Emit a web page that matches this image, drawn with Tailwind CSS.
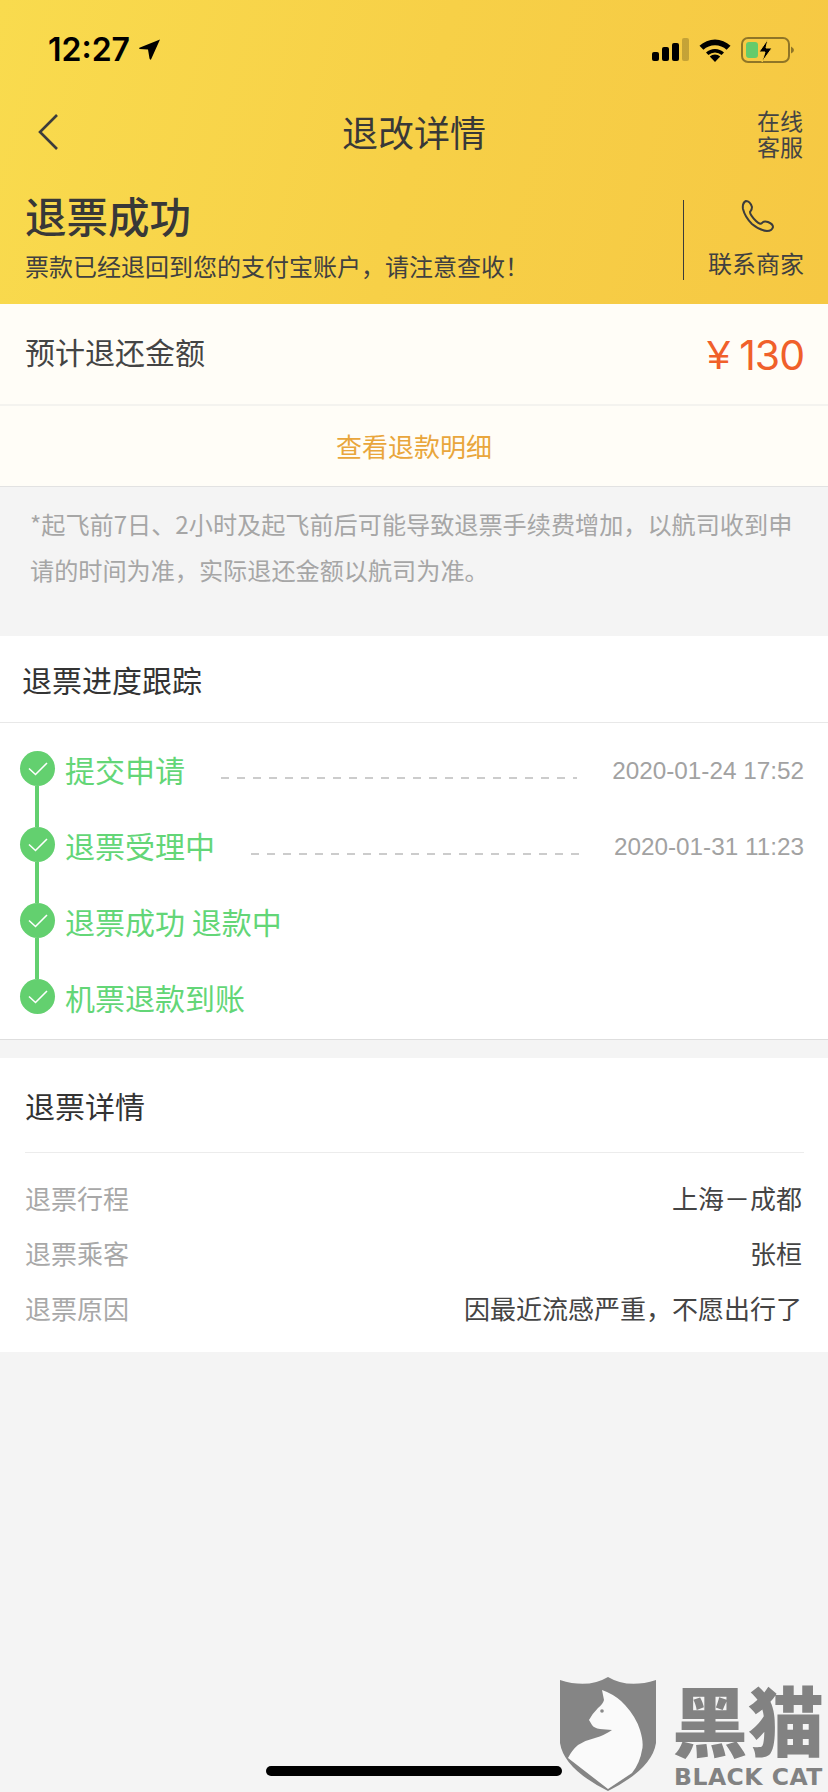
<!DOCTYPE html>
<html lang="zh"><head><meta charset="utf-8">
<script src="https://cdn.jsdelivr.net/npm/@tailwindcss/browser@4"></script>
</head>
<body class="m-0">
<div class="relative w-[828px] h-[1792px] overflow-hidden bg-[#f4f4f4] font-['Noto_Sans_CJK_SC','Noto_Sans',sans-serif] text-[#333]">
  <!-- yellow header -->
  <div class="h-[304px] bg-[linear-gradient(105deg,#f9db4e,#f7d047_50%,#f6c843)] flex flex-col">
    <div class="h-[94px] flex items-center justify-between pl-[48px] pr-[34px] pt-[5px] text-black">
      <div class="flex items-center gap-[9px]">
        <span class="font-['Inter'] font-semibold text-[32px] leading-none">12:27</span>
        <svg width="21" height="21" viewBox="0 0 21 21"><path d="M21 0.5 L12 20.5 Q11 21 10.5 19.5 L9 10.5 L0.5 10 Q-0.3 9 1 8.5 Z" fill="#000"/></svg>
      </div>
      <div class="flex items-center gap-[10px]">
        <svg width="37" height="23" viewBox="0 0 37 23"><rect x="0" y="14" width="7" height="9" rx="2"/><rect x="10" y="9" width="7" height="14" rx="2"/><rect x="20" y="5" width="7" height="18" rx="2"/><rect x="30" y="0" width="7" height="23" rx="2" fill="#000" fill-opacity=".2"/></svg>
        <svg width="32" height="24" viewBox="0 0 32 24"><path d="M16 24 L10.8 18.6 A7.5 7.5 0 0 1 21.2 18.6 Z"/><path d="M7 14.6 A13 13 0 0 1 25 14.6 L22.6 17.1 A9.6 9.6 0 0 0 9.4 17.1 Z"/><path d="M0.5 7.8 A22.5 22.5 0 0 1 31.5 7.8 L27.6 11.8 A17 17 0 0 0 4.4 11.8 Z"/></svg>
        <svg width="53" height="26" viewBox="0 0 53 26"><rect x="1" y="1" width="47" height="24" rx="6" fill="none" stroke="#000" stroke-opacity=".42" stroke-width="2"/><path d="M50 9.5 q3 1.5 3 3.5 t-3 3.5 Z" fill="#000" fill-opacity=".42"/><rect x="5" y="5" width="12" height="16" rx="3" fill="#65cb6b"/><path d="M27 2 L18 15 L24 15 L21 25 L31 11 L25 11 Z" fill="#000" stroke="#f6cc44" stroke-width="1"/></svg>
      </div>
    </div>
    <div class="h-[79px] pb-[6px] relative flex items-center justify-center">
      <svg class="absolute left-[37px] top-[19px]" width="22" height="38" viewBox="0 0 22 38"><path d="M20 2 L3 19 L20 36" fill="none" stroke="#3c3c3c" stroke-width="2.6"/></svg>
      <div class="text-[36px] leading-none text-[#383838]">退改详情</div>
      <div class="absolute right-[25px] top-[13px] w-[46px] text-[23px] leading-[26px] text-[#444]">在线<br>客服</div>
    </div>
    <div class="flex-1 flex pl-[25px] pr-[24px]">
      <div class="flex-1 pt-[17px]">
        <div class="text-[41.5px] leading-[50px] font-medium text-[#383838]">退票成功</div>
        <div class="text-[24px] leading-[32px] mt-[10px] text-[#404040]">票款已经退回到您的支付宝账户，请注意查收！</div>
      </div>
      <div class="w-[1px] h-[80px] mt-[27px] bg-[#3a3a3a]"></div>
      <div class="w-[120px] flex flex-col items-end pt-[26px]">
        <svg class="mr-[29px]" width="34" height="34" viewBox="0 0 34 34"><path d="M5 2 Q1 4 2 10 Q4 18 11 25 Q18 31 26 32 Q31 32 32 28 Q32 25 27 23 Q23 21.5 21 24 Q19 26 15 22 Q9 16 9 13 Q11 11 11 8 Q9 2 5 2 Z" fill="none" stroke="#3c3c3c" stroke-width="2"/></svg>
        <div class="text-[24px] leading-[32px] mt-[14px] text-[#404040] whitespace-nowrap">联系商家</div>
      </div>
    </div>
  </div>
  <!-- amount -->
  <div class="bg-[#fffdf7]">
    <div class="h-[102px] flex items-center justify-between pl-[25px] pr-[24px] border-b-2 border-[#f4f3ef]">
      <span class="text-[30px] leading-none text-[#444] -mt-[7px]">预计退还金额</span>
      <span class="text-[#f0602a] flex items-center gap-[9px] font-['Liberation_Sans'] text-[41px] leading-none mt-[3px]"><span>¥</span><span class="font-['Inter'] tracking-[-1px]">130</span></span>
    </div>
    <div class="h-[81px] flex items-center justify-center text-[26px] leading-none text-[#e9a63c] border-b border-[#e2e2e2]">查看退款明细</div>
  </div>
  <!-- note -->
  <div class="h-[149px] pl-[30px] pr-[30px] pt-[14px] text-[24.15px] leading-[46px] text-[#a6a6a6]">*起飞前7日、2小时及起飞前后可能导致退票手续费增加，以航司收到申请的时间为准，实际退还金额以航司为准。</div>
  <!-- progress -->
  <div class="bg-white h-[404px] border-b border-[#dedede]">
    <div class="h-[87px] flex items-center pl-[22px] text-[30px] leading-none text-[#333] border-b border-[#e8e8e8]">退票进度跟踪</div>
    <div class="pt-[28px] pl-[20px] pr-[24px]">
      <div class="flex items-center h-[35px] mb-[41px]">
        <div class="relative w-[35px] h-[35px] rounded-full bg-[#63d06f] flex items-center justify-center shrink-0"><svg width="20" height="14" viewBox="0 0 20 14"><path d="M1 6.5 L7.5 12.5 L19 1" fill="none" stroke="#fff" stroke-width="1.6"/></svg><div class="absolute left-[15px] top-[35px] w-[4px] h-[41px] bg-[#63d06f]"></div></div>
        <span class="ml-[10px] text-[30px] leading-none text-[#63d677]">提交申请</span>
        <div class="flex-1 ml-[36px] mr-[35px] mt-[18px] h-[2px] bg-[repeating-linear-gradient(90deg,#cccccc_0,#cccccc_8px,transparent_8px,transparent_16px)]"></div>
        <span class="font-['Liberation_Sans'] text-[24.3px] leading-none mt-[5px] text-[#a2a2a2]">2020-01-24 17:52</span>
      </div>
      <div class="flex items-center h-[35px] mb-[41px]">
        <div class="relative w-[35px] h-[35px] rounded-full bg-[#63d06f] flex items-center justify-center shrink-0"><svg width="20" height="14" viewBox="0 0 20 14"><path d="M1 6.5 L7.5 12.5 L19 1" fill="none" stroke="#fff" stroke-width="1.6"/></svg><div class="absolute left-[15px] top-[35px] w-[4px] h-[41px] bg-[#63d06f]"></div></div>
        <span class="ml-[10px] text-[30px] leading-none text-[#63d677]">退票受理中</span>
        <div class="flex-1 ml-[36px] mr-[35px] mt-[18px] h-[2px] bg-[repeating-linear-gradient(90deg,#cccccc_0,#cccccc_8px,transparent_8px,transparent_16px)]"></div>
        <span class="font-['Liberation_Sans'] text-[24.3px] leading-none mt-[5px] text-[#a2a2a2]">2020-01-31 11:23</span>
      </div>
      <div class="flex items-center h-[35px] mb-[41px]">
        <div class="relative w-[35px] h-[35px] rounded-full bg-[#63d06f] flex items-center justify-center shrink-0"><svg width="20" height="14" viewBox="0 0 20 14"><path d="M1 6.5 L7.5 12.5 L19 1" fill="none" stroke="#fff" stroke-width="1.6"/></svg><div class="absolute left-[15px] top-[35px] w-[4px] h-[41px] bg-[#63d06f]"></div></div>
        <span class="ml-[10px] text-[30px] leading-none text-[#63d677]">退票成功 退款中</span>
      </div>
      <div class="flex items-center h-[35px]">
        <div class="w-[35px] h-[35px] rounded-full bg-[#63d06f] flex items-center justify-center shrink-0"><svg width="20" height="14" viewBox="0 0 20 14"><path d="M1 6.5 L7.5 12.5 L19 1" fill="none" stroke="#fff" stroke-width="1.6"/></svg></div>
        <span class="ml-[10px] text-[30px] leading-none text-[#63d677]">机票退款到账</span>
      </div>
    </div>
  </div>
  <!-- details -->
  <div class="mt-[18px] bg-white h-[294px] pl-[25px] pr-[24px]">
    <div class="h-[95px] flex items-center text-[30px] leading-none border-b border-[#ececec]">退票详情</div>
    <div class="pt-[17px] pr-[2px] text-[26px] leading-[55px]">
      <div class="flex justify-between"><span class="text-[#a8a8a8]">退票行程</span><span class="text-[#444]">上海－成都</span></div>
      <div class="flex justify-between"><span class="text-[#a8a8a8]">退票乘客</span><span class="text-[#444]">张桓</span></div>
      <div class="flex justify-between"><span class="text-[#a8a8a8]">退票原因</span><span class="text-[#444]">因最近流感严重，不愿出行了</span></div>
    </div>
  </div>
  <!-- home bar -->
  <div class="absolute left-[266px] top-[1766px] w-[296px] h-[10px] rounded-full bg-black"></div>
  <!-- watermark -->
  <div class="absolute left-[560px] top-[1677px] flex text-[#828282]">
    <svg width="96" height="114" viewBox="0 0 96 114"><path d="M0 3 Q28 12 48 0 Q68 12 96 3 L96 66 Q92 92 48 114 Q4 92 0 66 Z" fill="#858585"/><path d="M42 13 L47 15 Q58 20 65 28 Q76 40 80 53 Q84 66 82 73 Q80 86 72 96 L48 112 L8 81 Q12 73 18 68 Q26 63 35 61 Q45 58 52 53 L40 52 Q34 51 32 48 L29 43 Q32 37 38 31 Q43 27 44 23 Z" fill="#fafafa"/><circle cx="42" cy="34" r="1.8" fill="#8a8a8a"/></svg>
    <div class="ml-[18px] w-[152px] flex flex-col">
      <div class="font-['Noto_Sans_CJK_SC'] font-black text-[76px] leading-[66px] whitespace-nowrap mt-[8px] -ml-[2px]">黑猫</div>
      <div class="font-['DejaVu_Sans'] font-bold text-[23.5px] leading-none whitespace-nowrap mt-[15px] tracking-[0.5px]">BLACK CAT</div>
    </div>
  </div>
</div>
</body></html>
